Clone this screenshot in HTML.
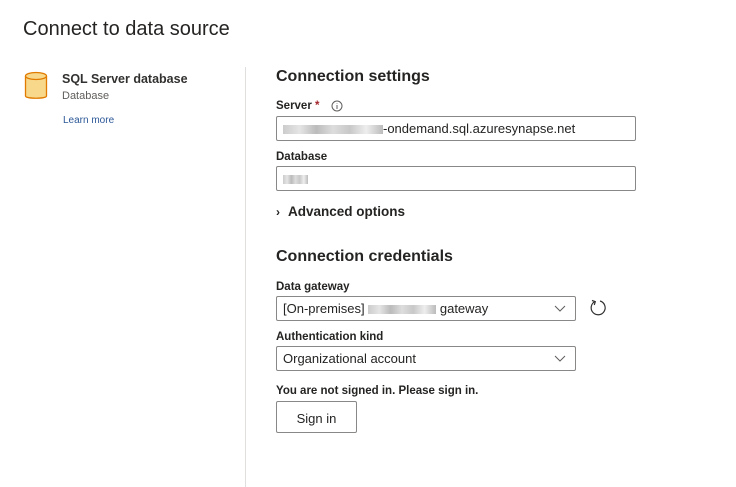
<!DOCTYPE html>
<html><head><style>
body{margin:0;width:736px;height:487px;background:#fff;font-family:"Liberation Sans",sans-serif;color:#252423;position:relative;overflow:hidden}
.a{position:absolute;white-space:nowrap}
.lbl{font-size:11.5px;font-weight:bold;color:#252423}
.box{position:absolute;border:1px solid #8a8886;border-radius:2px;box-sizing:border-box;background:#fff;font-size:13px;line-height:23px;padding-left:6px;color:#252423}
.blur{display:inline-block;height:9px;background:linear-gradient(90deg,#ccc,#e5e5e5,#bbb,#ddd,#c8c8c8,#eee,#bbb);vertical-align:middle}
.chev{position:absolute;right:9px;top:5px}
</style></head><body>
<div class="a" style="left:23px;top:18px;font-size:20px;color:#252423">Connect to data source</div>
<div class="a" style="left:245px;top:67px;width:1px;height:420px;background:#e1dfdd"></div>
<svg class="a" style="left:24px;top:71px" width="24" height="31" viewBox="0 0 24 31"><path d="M1.5 5 V25 C1.5 28 22.5 28 22.5 25 V5" fill="#f8d98c" stroke="#e07b00" stroke-width="1.3"/><ellipse cx="12" cy="5" rx="10.5" ry="3.5" fill="#f8d98c" stroke="#e07b00" stroke-width="1.3"/></svg>
<div class="a" style="left:62px;top:72px;font-size:12.5px;font-weight:bold;color:#323130">SQL Server database</div>
<div class="a" style="left:62px;top:90px;font-size:11px;color:#605e5c">Database</div>
<div class="a" style="left:63px;top:115px;font-size:10px;color:#2b5797">Learn more</div>

<div class="a" style="left:276px;top:68px;font-size:16px;font-weight:bold;color:#252423">Connection settings</div>
<div class="a lbl" style="left:276px;top:100px">Server <span style="color:#a4262c">*</span></div>
<svg class="a" style="left:331px;top:100px" width="12" height="12"><circle cx="6" cy="6" r="5" fill="none" stroke="#605e5c"/><path d="M6 5v4M6 3.2v.6" stroke="#605e5c"/></svg>
<div class="box" style="left:276px;top:116px;width:360px;height:25px"><span class="blur" style="width:100px"></span>-ondemand.sql.azuresynapse.net</div>
<div class="a lbl" style="left:276px;top:151px">Database</div>
<div class="box" style="left:276px;top:166px;width:360px;height:25px"><span class="blur" style="width:25px"></span></div>
<div class="a" style="left:276px;top:204px;font-size:13.5px;font-weight:bold;color:#252423"><span style="font-size:12px;margin-right:8px">&#8250;</span>Advanced options</div>

<div class="a" style="left:276px;top:248px;font-size:16px;font-weight:bold;color:#252423">Connection credentials</div>
<div class="a lbl" style="left:276px;top:281px">Data gateway</div>
<div class="box" style="left:276px;top:296px;width:300px;height:25px">[On-premises] <span class="blur" style="width:68px"></span> gateway<svg class="chev" width="12" height="12"><path d="M1 4l5 5 5-5" fill="none" stroke="#605e5c"/></svg></div>
<svg class="a" style="left:589px;top:298px" width="19" height="19" viewBox="0 0 19 19"><path d="M6 3.5 A7 7 0 1 0 11 3" fill="none" stroke="#323130" stroke-width="1.2"/><path d="M3 2.5 L6.3 3.6 L5.3 7" fill="none" stroke="#323130" stroke-width="1.2"/></svg>
<div class="a lbl" style="left:276px;top:331px">Authentication kind</div>
<div class="box" style="left:276px;top:346px;width:300px;height:25px">Organizational account<svg class="chev" width="12" height="12"><path d="M1 4l5 5 5-5" fill="none" stroke="#605e5c"/></svg></div>
<div class="a lbl" style="left:276px;top:385px">You are not signed in. Please sign in.</div>
<div class="box" style="left:276px;top:401px;width:81px;height:32px;text-align:center;padding:0;line-height:33px;font-size:13px">Sign in</div>
</body></html>
